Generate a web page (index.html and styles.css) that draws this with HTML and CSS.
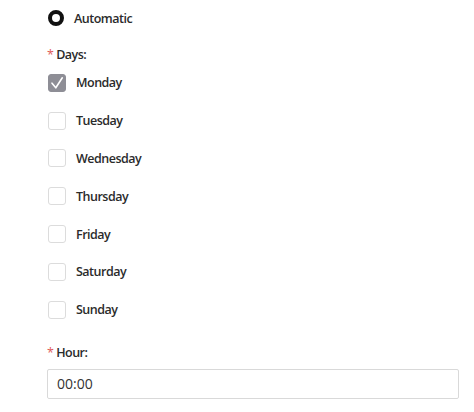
FILE: index.html
```html
<!DOCTYPE html>
<html>
<head>
<meta charset="utf-8">
<link rel="stylesheet" href="styles.css">
</head>
<body>
<div class="form">
  <label class="radio-row">
    <span class="radio"></span>
    <span class="opt-label">Automatic</span>
  </label>

  <div class="field-label"><span class="req">*</span> Days:</div>
  <div class="checks">
    <label class="check-row">
      <span class="checkbox checked">
        <svg viewBox="0 0 18 18" width="18" height="18"><path d="M4 9.2 L7.8 13.8 L14.3 3.8" fill="none" stroke="#fff" stroke-width="1.6" stroke-linecap="round" stroke-linejoin="round"/></svg>
      </span>
      <span class="opt-label">Monday</span>
    </label>
    <label class="check-row"><span class="checkbox"></span><span class="opt-label">Tuesday</span></label>
    <label class="check-row"><span class="checkbox"></span><span class="opt-label">Wednesday</span></label>
    <label class="check-row"><span class="checkbox"></span><span class="opt-label">Thursday</span></label>
    <label class="check-row"><span class="checkbox"></span><span class="opt-label">Friday</span></label>
    <label class="check-row"><span class="checkbox"></span><span class="opt-label">Saturday</span></label>
    <label class="check-row"><span class="checkbox"></span><span class="opt-label">Sunday</span></label>
  </div>

  <div class="field-label hour-label"><span class="req">*</span> Hour:</div>
  <div class="input">00:00</div>
</div>
</body>
</html>
```

FILE: styles.css
```css
html, body {
  margin: 0;
  padding: 0;
  background: #fff;
}
body {
  font-family: "Open Sans", "Noto Sans", "Liberation Sans", sans-serif;
  color: #2b2b2b;
}
.form {
  padding: 9px 15px 0 47px;
  display: flex;
  flex-direction: column;
}
.radio-row {
  display: flex;
  align-items: center;
  height: 18px;
  gap: 10px;
}
.radio {
  width: 16px;
  height: 16px;
  box-sizing: border-box;
  border-radius: 50%;
  border: 4.5px solid #111;
  background: #fff;
  margin-left: 1px;
}
.opt-label {
  font-size: 12.5px;
  font-weight: 600;
  letter-spacing: -0.5px;
  color: #2b2b2b;
}
.field-label {
  font-size: 12.5px;
  font-weight: 600;
  letter-spacing: -0.5px;
  color: #2b2b2b;
  margin-top: 19px;
  height: 18px;
  line-height: 18px;
}
.req {
  color: #e05a5a;
  font-weight: 400;
}
.checks {
  display: flex;
  flex-direction: column;
}
.check-row {
  display: flex;
  align-items: center;
  height: 37.8px;
  gap: 10px;
}
.checkbox {
  width: 18px;
  height: 18px;
  margin-left: 1px;
  box-sizing: border-box;
  border: 1px solid #dcdcdc;
  border-radius: 3px;
  background: #fff;
  display: flex;
  align-items: center;
  justify-content: center;
}
.checkbox.checked {
  background: #8e8e96;
  border-color: #8e8e96;
}
.checkbox svg {
  flex: none;
}
.hour-label {
  margin-top: 15px;
}
.input {
  margin-top: 7px;
  height: 30px;
  box-sizing: border-box;
  border: 1px solid #d9d9d9;
  border-radius: 2px;
  padding: 0 9px;
  display: flex;
  align-items: center;
  font-size: 14px;
  color: #333;
}
```
